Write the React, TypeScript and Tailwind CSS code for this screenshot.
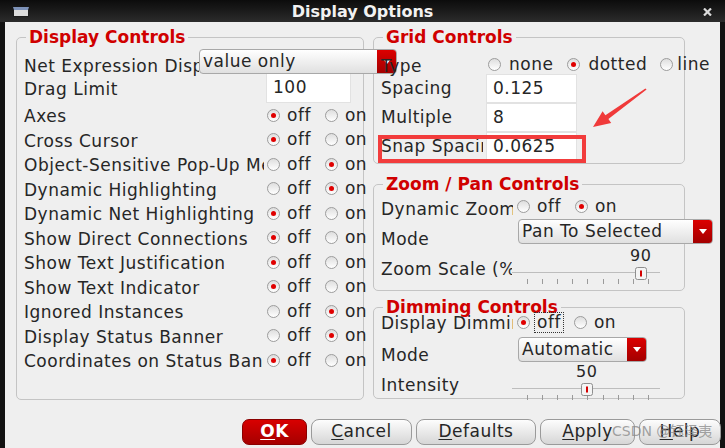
import React from "react";

const Radio = ({ checked }: { checked?: boolean }) => (
  <span className="flex h-[13px] w-[13px] shrink-0 items-center justify-center rounded-full border border-[#9c9c9c] bg-gradient-to-b from-[#dedede] to-white">
    {checked && <span className="h-[5px] w-[5px] rounded-full bg-[#e00000]" />}
  </span>
);

interface OffOnProps {
  on: boolean;
  focus?: boolean;
}

const OffOn = ({ on, focus }: OffOnProps) => (
  <div className="flex shrink-0 items-center whitespace-nowrap">
    <Radio checked={!on} />
    {focus ? (
      <span className="ml-[4px] border border-dotted border-[#333] px-[2px] leading-[19px]">off</span>
    ) : (
      <span className="ml-[7px]">off</span>
    )}
    <span className={focus ? "ml-[10px]" : "ml-[14px]"}>
      <Radio checked={on} />
    </span>
    <span className="ml-[7px]">on</span>
  </div>
);

const Select = ({ value, className }: { value: string; className: string }) => (
  <div
    className={`relative z-10 flex h-[25px] shrink-0 overflow-hidden rounded-[4px] border border-[#a8a8a8] bg-gradient-to-b from-white to-[#e0e0e0] ${className}`}
  >
    <span className="flex-1 overflow-hidden whitespace-nowrap pl-[3px] leading-[23px]">{value}</span>
    <span className="flex w-[19px] items-center justify-center bg-gradient-to-b from-[#dc0000] to-[#a30000]">
      <svg width="8" height="5" viewBox="0 0 8 5">
        <path d="M0 0h8L4 5z" fill="#fff" />
      </svg>
    </span>
  </div>
);

const Input = ({ value }: { value: string }) => (
  <div className="flex h-[29px] w-[91px] shrink-0 items-center border border-[#e2e2e2] bg-white pl-[6px]">
    {value}
  </div>
);

const Slider = ({ value, pos }: { value: number; pos: number }) => (
  <div className="flex w-[150px] shrink-0 flex-col">
    <span className="text-[16px] leading-[16px]" style={{ marginLeft: pos - 11 }}>
      {value}
    </span>
    <svg width="150" height="18" className="mt-[3px]">
      <line x1="0" y1="5.5" x2="148" y2="5.5" stroke="#bdbdbd" />
      {[15, 30, 45, 60, 75, 91, 106, 121, 136].map((x) => (
        <line key={x} x1={x + 0.5} y1="12" x2={x + 0.5} y2="17" stroke="#9a9a9a" />
      ))}
      <rect x={pos - 5.5} y="0.5" width="11" height="12" rx="2" fill="#f4f4f4" stroke="#8e8e8e" />
      <rect x={pos - 1} y="3.5" width="2" height="6" fill="#d40000" />
    </svg>
  </div>
);

const Legend = ({ children }: { children: string }) => (
  <legend className="ml-[2px] px-[3px] text-[17px] font-bold leading-[16px] tracking-normal text-[#d00000]">
    {children}
  </legend>
);

const rows: [string, boolean][] = [
  ["Axes", false],
  ["Cross Cursor", false],
  ["Object-Sensitive Pop-Up Menu", true],
  ["Dynamic Highlighting", true],
  ["Dynamic Net Highlighting", false],
  ["Show Direct Connections", false],
  ["Show Text Justification", false],
  ["Show Text Indicator", false],
  ["Ignored Instances", true],
  ["Display Status Banner", true],
  ["Coordinates on Status Banner", false],
];

const Button = ({ first, rest, width }: { first: string; rest: string; width: string }) => (
  <button
    className={`flex h-[26px] items-center justify-center rounded-[8px] border border-[#9a9a9a] bg-gradient-to-b from-[#fdfdfd] to-[#d6d6d6] text-[17px] ${width}`}
  >
    <span className="underline decoration-1 underline-offset-2">{first}</span>
    {rest}
  </button>
);

export default function App() {
  return (
    <div className="relative h-[448px] w-[725px] overflow-hidden bg-[#121212] font-['DejaVu_Sans',sans-serif] text-[17px] tracking-[0.5px] text-[#262626]">
      {/* title bar */}
      <div className="grid h-[22px] grid-cols-[1fr_auto_1fr] items-center bg-gradient-to-b from-[#0c0c0c] to-[#2c2c2c]">
        <div className="pl-[13px]">
          <div className="h-[10px] w-[16px] border border-[#1c1c1c] border-t-[3px] border-t-[#7d92b8] bg-[#dcdcdc]" />
        </div>
        <div className="text-[16px] font-bold tracking-normal text-[#f2f2f2]">Display Options</div>
        <div className="flex justify-end pr-[13px]">
          <svg width="9" height="8" viewBox="0 0 9 8">
            <path d="M1 0.5l7 7M8 0.5l-7 7" stroke="#dcdcdc" strokeWidth="2.2" />
          </svg>
        </div>
      </div>

      {/* body */}
      <div className="mx-[5px] flex h-[426px] flex-col bg-[#efefef] pl-[11px] pt-[7px]">
        <div className="flex gap-[9px]">
          {/* Display Controls */}
          <fieldset className="h-[371px] w-[348px] min-w-0 shrink-0 rounded-[5px] border border-[#c4c4c4] px-[7px] pt-[4px]">
            <Legend>Display Controls</Legend>
            <div className="flex h-[24px] items-start">
              <span className="mt-[5px] w-[175px] shrink-0 overflow-hidden whitespace-nowrap">Net Expression Display</span>
              <Select value="value only" className="h-[24px] w-[198px]" />
            </div>
            <div className="flex h-[30px] items-start">
              <span className="mt-[4px] w-[242px] shrink-0 whitespace-nowrap">Drag Limit</span>
              <div className="flex h-[30px] w-[85px] shrink-0 items-center border border-[#e2e2e2] bg-white pl-[6px]">100</div>
            </div>
            <div className="w-[346px] overflow-hidden">
              {rows.map(([label, on]) => (
                <div key={label} className="flex h-[24.5px] items-center">
                  <span className="w-[240px] shrink-0 overflow-hidden whitespace-nowrap pt-[3px]">{label}</span>
                  <span className="ml-[3px]">
                    <OffOn on={on} />
                  </span>
                </div>
              ))}
            </div>
          </fieldset>

          <div className="flex shrink-0 flex-col">
            {/* Grid Controls */}
            <fieldset className="h-[135px] w-[312px] min-w-0 rounded-[5px] border border-[#c4c4c4] px-[7px] pt-[4px]">
              <Legend>Grid Controls</Legend>
              <div className="flex h-[25px] items-start">
                <span className="relative z-20 mt-[5px] w-[107px] shrink-0">Type</span>
                <div className="mt-[3px] flex shrink-0 items-center whitespace-nowrap">
                  <Radio />
                  <span className="ml-[8px]">none</span>
                  <span className="ml-[14px]">
                    <Radio checked />
                  </span>
                  <span className="ml-[8px]">dotted</span>
                  <span className="ml-[13px]">
                    <Radio />
                  </span>
                  <span className="ml-[4px]">line</span>
                </div>
              </div>
              {[
                ["Spacing", "0.125"],
                ["Multiple", "8"],
                ["Snap Spacing", "0.0625"],
              ].map(([label, value]) => (
                <div key={label} className="flex h-[29px] items-center">
                  <span className="w-[102px] shrink-0 overflow-hidden whitespace-nowrap pt-[1px]">{label}</span>
                  <span className="ml-[3px]">
                    <Input value={value} />
                  </span>
                </div>
              ))}
            </fieldset>

            {/* Zoom / Pan Controls */}
            <fieldset className="mt-[12px] h-[115px] w-[312px] min-w-0 rounded-[5px] border border-[#c4c4c4] px-[7px]">
              <Legend>Zoom / Pan Controls</Legend>
              <div className="flex h-[25px] items-start">
                <span className="mt-[5px] w-[132px] shrink-0 overflow-hidden whitespace-nowrap">Dynamic Zoom</span>
                <span className="ml-[4px] mt-[2px]">
                  <OffOn on />
                </span>
              </div>
              <div className="flex h-[31px] items-start">
                <span className="mt-[10px] w-[137px] shrink-0">Mode</span>
                <Select value="Pan To Selected" className="mt-[2px] w-[195px]" />
              </div>
              <div className="flex items-end">
                <span className="mb-[3px] w-[131px] shrink-0 overflow-hidden whitespace-nowrap">Zoom Scale (%)</span>
                <Slider value={90} pos={129} />
              </div>
            </fieldset>

            {/* Dimming Controls */}
            <fieldset className="mt-[8px] h-[100px] w-[312px] min-w-0 rounded-[5px] border border-[#c4c4c4] px-[7px]">
              <Legend>Dimming Controls</Legend>
              <div className="-mt-[3px] flex h-[21px] items-center">
                <span className="w-[132px] shrink-0 overflow-hidden whitespace-nowrap pt-[3px]">Display Dimming</span>
                <span className="ml-[4px]">
                  <OffOn on={false} focus />
                </span>
              </div>
              <div className="flex h-[31px] items-start">
                <span className="mt-[10px] w-[137px] shrink-0">Mode</span>
                <Select value="Automatic" className="mt-[4px] w-[129px]" />
              </div>
              <div className="flex items-end">
                <span className="mb-[3px] w-[131px] shrink-0">Intensity</span>
                <Slider value={50} pos={75} />
              </div>
            </fieldset>
          </div>
        </div>

        {/* buttons */}
        <div className="mt-[19px] flex gap-[4px] pl-[226px]">
          <button className="flex h-[26px] w-[65px] shrink-0 items-center justify-center rounded-[7px] border border-[#8a0000] bg-gradient-to-b from-[#d80000] to-[#a60000] text-[17px] font-bold text-white">
            <span className="underline decoration-1 underline-offset-2">O</span>K
          </button>
          <Button first="C" rest="ancel" width="w-[101px] shrink-0" />
          <Button first="D" rest="efaults" width="w-[120px] shrink-0" />
          <Button first="A" rest="pply" width="w-[95px] shrink-0" />
          <Button first="H" rest="elp" width="w-[82px] shrink-0" />
        </div>
      </div>

      {/* annotation overlays */}
      <div className="absolute left-[378px] top-[135px] h-[28px] w-[208px] border-[4px] border-[#f23c3c]" />
      <svg className="pointer-events-none absolute inset-0" width="725" height="448" viewBox="0 0 725 448">
        <polygon
          points="646.6,89.6 645.4,88.4 605.4,115.3 602.6,111.2 593,127 611.2,122.9 608.4,118.9"
          fill="#f03a3a"
        />
      </svg>
      <div className="absolute left-[612px] top-[421px] font-['DejaVu_Sans','Noto_Sans_CJK_SC',sans-serif] text-[14px] tracking-normal text-[#8c8c8c]/80">
        CSDN @钰泽夷
      </div>
    </div>
  );
}
